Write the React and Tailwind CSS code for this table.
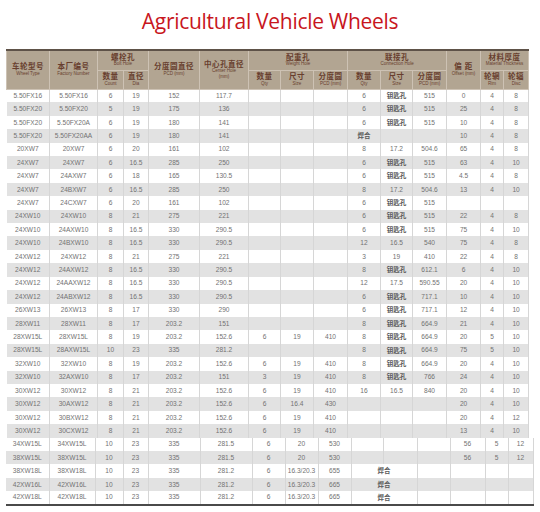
import { memo } from "react";

const KEY = "钥匙孔";
const WELD = "焊合";

const topRows = [
	["5.50FX16", "5.50FX16", "6", "19", "152", "117.7", "", "", "", "6", KEY, "515", "0", "4", "8"],
	["5.50FX20", "5.50FX20", "5", "19", "175", "136", "", "", "", "6", KEY, "515", "25", "4", "8"],
	["5.50FX20", "5.50FX20A", "6", "19", "180", "141", "", "", "", "6", KEY, "515", "10", "4", "8"],
	["5.50FX20", "5.50FX20AA", "6", "19", "180", "141", "", "", "", WELD, "", "", "10", "4", "8"],
	["20XW7", "20XW7", "6", "20", "161", "102", "", "", "", "8", "17.2", "504.6", "65", "4", "8"],
	["24XW7", "24XW7", "6", "16.5", "285", "250", "", "", "", "6", KEY, "515", "63", "4", "10"],
	["24XW7", "24AXW7", "6", "18", "165", "130.5", "", "", "", "6", KEY, "515", "4.5", "4", "8"],
	["24XW7", "24BXW7", "6", "16.5", "285", "250", "", "", "", "8", "17.2", "504.6", "13", "4", "10"],
	["24XW7", "24CXW7", "6", "20", "161", "102", "", "", "", "6", KEY, "515", "", "", ""],
	["24XW10", "24XW10", "8", "21", "275", "221", "", "", "", "6", KEY, "515", "22", "4", "8"],
	["24XW10", "24AXW10", "8", "16.5", "330", "290.5", "", "", "", "6", KEY, "515", "75", "4", "10"],
	["24XW10", "24BXW10", "8", "16.5", "330", "290.5", "", "", "", "12", "16.5", "540", "75", "4", "8"],
	["24XW12", "24XW12", "8", "21", "275", "221", "", "", "", "3", "19", "410", "22", "4", "8"],
	["24XW12", "24AXW12", "8", "16.5", "330", "290.5", "", "", "", "8", KEY, "612.1", "6", "4", "10"],
	["24XW12", "24AAXW12", "8", "16.5", "330", "290.5", "", "", "", "12", "17.5", "590.55", "20", "4", "10"],
	["24XW12", "24ABXW12", "8", "16.5", "330", "290.5", "", "", "", "6", KEY, "717.1", "10", "4", "10"],
	["26XW13", "26XW13", "8", "17", "330", "290", "", "", "", "6", KEY, "717.1", "12", "4", "10"],
	["28XW11", "28XW11", "8", "17", "203.2", "151", "", "", "", "8", KEY, "664.9", "21", "4", "10"],
	["28XW15L", "28XW15L", "8", "19", "203.2", "152.6", "6", "19", "410", "8", KEY, "664.9", "20", "5", "10"],
	["28XW15L", "28AXW15L", "10", "23", "335", "281.2", "", "", "", "8", KEY, "664.9", "75", "5", "10"],
	["32XW10", "32XW10", "8", "19", "203.2", "152.6", "6", "19", "410", "8", KEY, "664.9", "20", "4", "10"],
	["32XW10", "32AXW10", "8", "17", "203.2", "151", "3", "19", "410", "8", KEY, "766", "24", "4", "10"],
	["30XW12", "30XW12", "8", "21", "203.2", "152.6", "6", "19", "410", "16", "16.5", "840", "20", "4", "10"],
	["30XW12", "30AXW12", "8", "21", "203.2", "152.6", "6", "16.4", "430", "", "", "", "20", "4", "10"],
	["30XW12", "30BXW12", "8", "21", "203.2", "152.6", "6", "19", "410", "", "", "", "20", "4", "12"],
	["30XW12", "30CXW12", "8", "21", "203.2", "152.6", "6", "19", "410", "", "", "", "13", "4", "10"],
];

// pasted lower block, its columns sit a few pixels off the main ones
const bottomRows = [
	["34XW15L", "34XW15L", "10", "23", "335", "281.5", "6", "20", "530", "", "", "", "56", "5", "12"],
	["38XW15L", "38XW15L", "10", "23", "335", "281.5", "6", "20", "530", "", "", "", "56", "5", "12"],
	["38XW18L", "38XW18L", "10", "23", "335", "281.2", "6", "16.3/20.3", "655", WELD, null, "", "", "", ""],
	["42XW16L", "42XW16L", "10", "23", "335", "281.2", "6", "16.3/20.3", "665", WELD, null, "", "", "", ""],
	["42XW18L", "42XW18L", "10", "23", "335", "281.2", "6", "16.3/20.3", "665", WELD, null, "", "", "", ""],
];

const topCols = [43, 48, 26, 25, 51, 49, 32, 33, 34, 33, 32, 34, 34, 23, 25];
const bottomCols = [43, 46, 28, 25, 52, 52, 33, 33, 33, 32, 34, 33, 35, 23, 25];

const Head = ({ zh, en, en2 }) => (
	<div className="flex flex-col items-center leading-none">
		<span className="text-[7.5px] font-bold tracking-[0.5px]">{zh}</span>
		<span className="text-[4.5px] mt-[1px] font-normal">{en}</span>
		{en2 && <span className="text-[4.5px] mt-[1px] font-normal">{en2}</span>}
	</div>
);

const Cell = ({ value, span }) => {
	const cjk = value === KEY || value === WELD;
	return (
		<td
			colSpan={span}
			className={`border-r border-[#d6d6d6] text-center p-0 whitespace-nowrap ${
				cjk ? "text-[6.5px] font-bold text-[#5a5a5a]" : "text-[6.6px] text-[#727272]"
			}`}
		>
			{value}
		</td>
	);
};

const Body = ({ rows, offset }) =>
	rows.map((row, i) => (
		<tr
			key={i}
			className={`h-[13.42px] ${(i + offset) % 2 ? "bg-[#e2e2e2]" : "bg-white"}`}
		>
			{row.map((v, j) => {
				if (v === null) return null;
				const span = row[j + 1] === null ? 2 : undefined;
				return <Cell key={j} value={v} span={span} />;
			})}
		</tr>
	));

const Cols = ({ widths }) => (
	<colgroup>
		{widths.map((w, i) => (
			<col key={i} style={{ width: w }} />
		))}
	</colgroup>
);

const App = () => {
	const th = "border border-[#cdc2b4] p-0 align-middle";
	return (
		<div className="w-[540px] h-[512px] bg-white overflow-hidden font-['Liberation_Sans','Noto_Sans_CJK_SC',sans-serif]">
			<h1 className="h-[49px] pt-[6px] text-center text-[21px] text-[#c8161d] font-['Open_Sans','Liberation_Sans',sans-serif] tracking-[-0.3px]">
				Agricultural Vehicle Wheels
			</h1>
			<div className="ml-[6px]">
				<table className="table-fixed border-collapse w-[522px]">
					<Cols widths={topCols} />
					<thead className="bg-[#b2a592] text-[#683e2e] border-t-2 border-[#5e5248]">
						<tr className="h-[20px]">
							<th rowSpan={2} className={th}>
								<Head zh="车轮型号" en="Wheel Type" />
							</th>
							<th rowSpan={2} className={th}>
								<Head zh="本厂编号" en="Factory Number" />
							</th>
							<th colSpan={2} className={th}>
								<Head zh="螺栓孔" en="Bolt Hole" />
							</th>
							<th rowSpan={2} className={th}>
								<Head zh="分度圆直径" en="PCD (mm)" />
							</th>
							<th rowSpan={2} className={th}>
								<Head zh="中心孔直径" en="Center Hole" en2="(mm)" />
							</th>
							<th colSpan={3} className={th}>
								<Head zh="配重孔" en="Weight Hole" />
							</th>
							<th colSpan={3} className={th}>
								<Head zh="联接孔" en="Connection Hole" />
							</th>
							<th rowSpan={2} className={th}>
								<Head zh="偏 距" en="Offset (mm)" />
							</th>
							<th colSpan={2} className={th}>
								<Head zh="材料厚度" en="Material Thickness" />
							</th>
						</tr>
						<tr className="h-[19px]">
							<th className={th}><Head zh="数量" en="Count" /></th>
							<th className={th}><Head zh="直径" en="Dia" /></th>
							<th className={th}><Head zh="数量" en="Qty" /></th>
							<th className={th}><Head zh="尺寸" en="Size" /></th>
							<th className={th}><Head zh="分度圆" en="PCD (mm)" /></th>
							<th className={th}><Head zh="数量" en="Qty" /></th>
							<th className={th}><Head zh="尺寸" en="Size" /></th>
							<th className={th}><Head zh="分度圆" en="PCD (mm)" /></th>
							<th className={th}><Head zh="轮辋" en="Rim" /></th>
							<th className={th}><Head zh="轮辐" en="Disc" /></th>
						</tr>
					</thead>
					<tbody>
						<Body rows={topRows} offset={0} />
					</tbody>
				</table>
				<table className="table-fixed border-collapse w-[527px] border-b-2 border-[#4a4a4a]">
					<Cols widths={bottomCols} />
					<tbody>
						<Body rows={bottomRows} offset={0} />
					</tbody>
				</table>
			</div>
		</div>
	);
};

export default memo(App);
